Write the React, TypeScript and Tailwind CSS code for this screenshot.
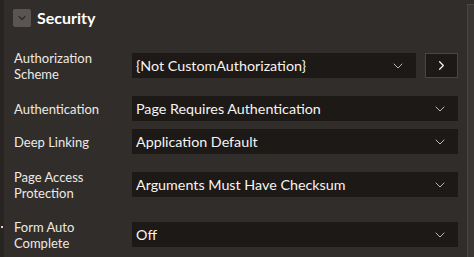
import { ChevronDown, ChevronRight } from 'lucide-react'

const rows: { label: string[]; value: string; button?: boolean; gap: string }[] = [
  { label: ['Authorization', 'Scheme'], value: '{Not CustomAuthorization}', button: true, gap: 'mt-[19px]' },
  { label: ['Authentication'], value: 'Page Requires Authentication', gap: 'mt-[18px]' },
  { label: ['Deep Linking'], value: 'Application Default', gap: 'mt-[8px]' },
  { label: ['Page Access', 'Protection'], value: 'Arguments Must Have Checksum', gap: 'mt-[18px]' },
  { label: ['Form Auto', 'Complete'], value: 'Off', gap: 'mt-[25px]' },
]

function Field({ label, value, button }: { label: string[]; value: string; button?: boolean }) {
  return (
    <div className="flex h-[25px] items-center">
      <div className="w-[118px] shrink-0 text-[13px] leading-[16px] text-[#ece9e6]">
        {label.map((l) => (
          <div key={l}>{l}</div>
        ))}
      </div>
      <div className="flex h-full flex-1 items-center gap-[9px]">
        <div className="flex h-full flex-1 items-center justify-between bg-[#1c1917] pl-[4px] pr-[10px] text-[14.3px] text-[#f7f4f1]">
          <span>{value}</span>
          <ChevronDown size={16} strokeWidth={1.5} className="text-[#bdb8b3]" />
        </div>
        {button && (
          <div className="flex h-full w-[33px] items-center justify-center border border-[#4a4542] bg-[#1c1917] text-[#f2efec]">
            <ChevronRight size={15} strokeWidth={2} />
          </div>
        )}
      </div>
    </div>
  )
}

export default function App() {
  return (
    <div className="flex h-[257px] w-[474px] overflow-hidden bg-[#312d2a]" style={{ fontFamily: 'Lato, sans-serif' }}>
      <div className="relative w-[4px] shrink-0 bg-[#282422]">
        <span className="absolute left-[1px] top-[226px] h-[2px] w-[2px] bg-[#d8d4d0]" />
      </div>
      <div className="flex flex-1 flex-col pl-[10px] pr-[9px]">
        <div className="-ml-px flex h-[34px] items-center gap-[6px] pt-[1px]">
          <div className="flex h-[18px] w-[18px] items-center justify-center rounded-[2px] bg-[#5a5552] text-[#2e2a28]">
            <ChevronDown size={12} strokeWidth={2.5} />
          </div>
          <span className="text-[16px] font-bold text-white">Security</span>
        </div>
        {rows.map((r) => (
          <div key={r.value} className={r.gap}>
            <Field label={r.label} value={r.value} button={r.button} />
          </div>
        ))}
      </div>
      <div className="mt-[4px] w-[7px] shrink-0 border-l border-t border-[#4a4643] bg-[#3a3633]" />
    </div>
  )
}
